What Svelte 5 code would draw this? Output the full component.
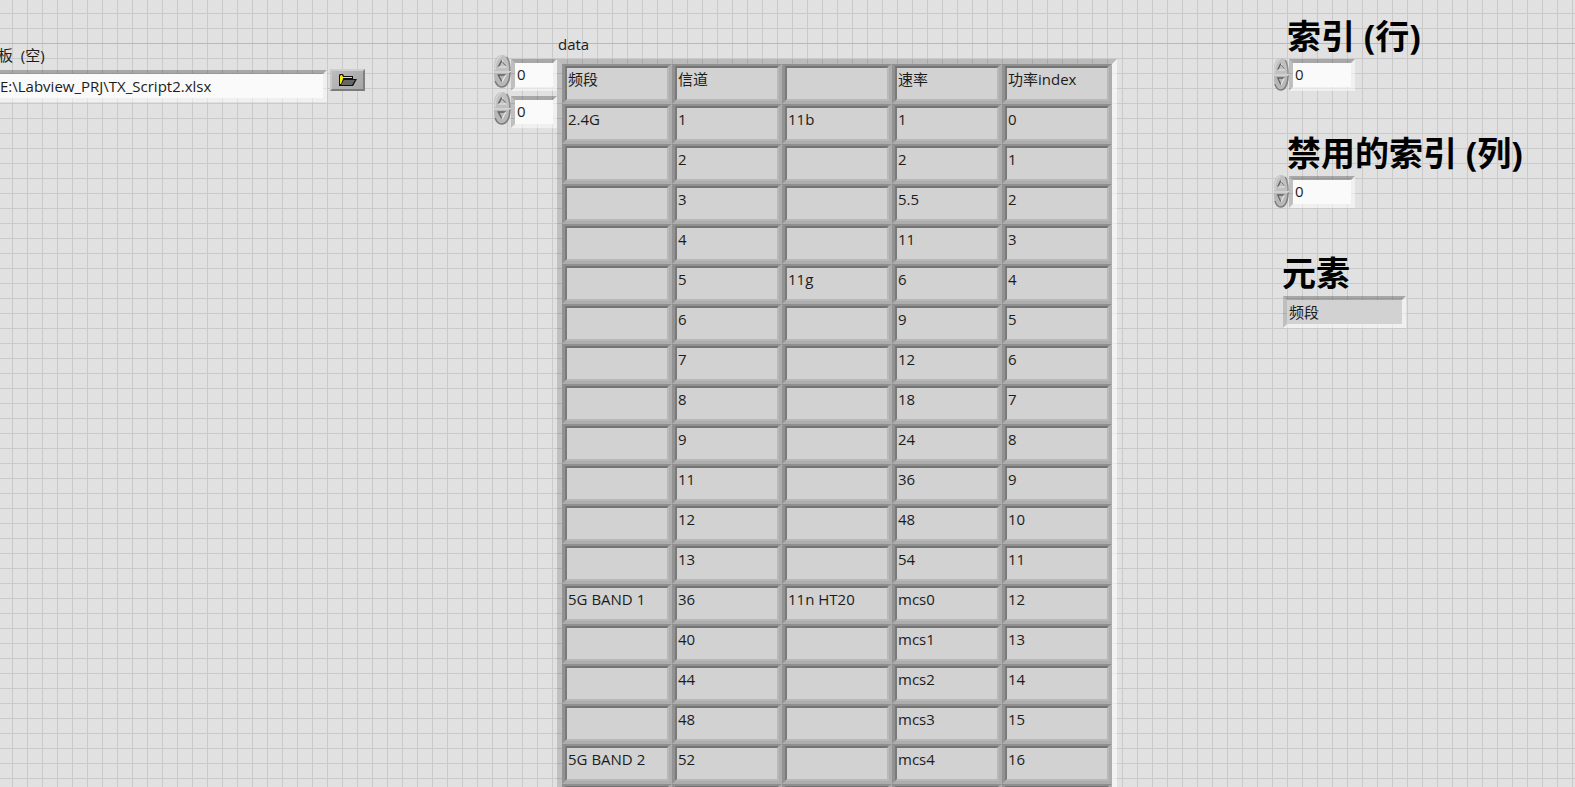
<script lang="ts">
	let path: string = $state('E:\\Labview_PRJ\\TX_Script2.xlsx');
	let dataRow: number = $state(0);
	let dataCol: number = $state(0);
	let row: number = $state(0);
	let col: number = $state(0);

	const data: string[][] = [
		['频段', '信道', '', '速率', '功率index'],
		['2.4G', '1', '11b', '1', '0'],
		['', '2', '', '2', '1'],
		['', '3', '', '5.5', '2'],
		['', '4', '', '11', '3'],
		['', '5', '11g', '6', '4'],
		['', '6', '', '9', '5'],
		['', '7', '', '12', '6'],
		['', '8', '', '18', '7'],
		['', '9', '', '24', '8'],
		['', '11', '', '36', '9'],
		['', '12', '', '48', '10'],
		['', '13', '', '54', '11'],
		['5G BAND 1', '36', '11n HT20', 'mcs0', '12'],
		['', '40', '', 'mcs1', '13'],
		['', '44', '', 'mcs2', '14'],
		['', '48', '', 'mcs3', '15'],
		['5G BAND 2', '52', '', 'mcs4', '16'],
		['', '', '', '', '']
	];

	let element: string = $derived(data[row]?.[col] ?? '');

	const down = (n: number) => Math.max(0, n - 1);
</script>

{#snippet spinner(inc: () => void, dec: () => void)}
	<span class="spinner">
		<button type="button" aria-label="Increment" onclick={inc}>
			<svg viewBox="0 0 17 17" preserveAspectRatio="none">
				<path d="M1 17V12C1 5 4 1 8.500 1S16 5 16 12V17Z" fill="#c0c0c0" />
				<path d="M13 3C15 6 16 9 16 17" fill="none" stroke="#8a8a8a" stroke-width="1.500" />
				<path d="M2 16C2 8 4 3 8 2" fill="none" stroke="#d4d4d4" stroke-width="1.500" />
				<path d="M5 13L8.500 6" stroke="#606060" stroke-width="1.500" />
				<path d="M8.500 6L12 13H5" fill="none" stroke="#e6e6e6" stroke-width="1" />
				<path d="M9 8L12 12" stroke="#707070" stroke-width="1" />
			</svg>
		</button>
		<button type="button" aria-label="Decrement" onclick={dec}>
			<svg viewBox="0 0 17 17" preserveAspectRatio="none">
				<path d="M1 0V5C1 12 4 16 8.500 16S16 12 16 5V0Z" fill="#b8b8b8" />
				<path d="M16 1C16 10 13 16 8 16C5 16 3 13 2 10" fill="none" stroke="#7c7c7c" stroke-width="1.500" />
				<path d="M1 1H16" stroke="#dadada" stroke-width="1.500" />
				<path d="M12 4H5L8.500 11" fill="none" stroke="#606060" stroke-width="1.300" />
				<path d="M12 4L8.500 11" stroke="#e6e6e6" stroke-width="1.200" />
			</svg>
		</button>
	</span>
{/snippet}

<main>
	<section class="file">
		<label for="path">板  (空)</label>
		<div class="file-row">
			<input id="path" class="sunken" type="text" bind:value={path} />
			<button class="browse" type="button" aria-label="Browse">
				<svg width="20" height="14" viewBox="0 0 20 14">
					<path d="M1 13V2L2 1H5L6 3H15V6H19L15 13Z" fill="#111" />
					<path d="M2 11V3L3 2H4L5 4H14V5H5V6L3 11Z" fill="#f4ee00" />
					<path d="M6 7H17L14 12H3Z" fill="#666" />
				</svg>
			</button>
		</div>
	</section>

	<section class="array">
		<div class="indices">
			<div class="control">
				{@render spinner(() => dataRow++, () => (dataRow = down(dataRow)))}
				<input class="sunken" type="text" aria-label="data row" bind:value={dataRow} />
			</div>
			<div class="control">
				{@render spinner(() => dataCol++, () => (dataCol = down(dataCol)))}
				<input class="sunken" type="text" aria-label="data column" bind:value={dataCol} />
			</div>
		</div>
		<div class="table">
			<h2 id="data-label">data</h2>
			<div class="frame">
				<table aria-labelledby="data-label">
					<tbody>
						{#each data as cells}
							<tr>
								{#each cells as cell}
									<td><div>{cell}</div></td>
								{/each}
							</tr>
						{/each}
					</tbody>
				</table>
			</div>
		</div>
	</section>

	<section class="lookup">
		<div class="field">
			<label for="row">索引 (行)</label>
			<div class="control">
				{@render spinner(() => row++, () => (row = down(row)))}
				<input id="row" class="sunken" type="text" bind:value={row} />
			</div>
		</div>
		<div class="field">
			<label for="col">禁用的索引 (列)</label>
			<div class="control">
				{@render spinner(() => col++, () => (col = down(col)))}
				<input id="col" class="sunken" type="text" bind:value={col} />
			</div>
		</div>
		<div class="field result">
			<label for="element">元素</label>
			<input id="element" class="sunken" type="text" readonly value={element} />
		</div>
	</section>
</main>

<style>
	:global(body) {
		background: #e1e1e1;
	}

	main {
		display: grid;
		grid-template-columns: 493fr auto 458fr;
		height: 100vh;
		overflow: hidden;
		font: 15px/20px 'Open Sans', 'Noto Sans CJK SC', sans-serif;
		color: #1c1c1c;
		background:
			linear-gradient(#b9b9b9, #b9b9b9) 0 43px / 100% 1px no-repeat,
			linear-gradient(#cacaca 1px, transparent 1px) 0 13px / 15px 15px,
			linear-gradient(90deg, #cacaca 1px, transparent 1px) 12px 0 / 15px 15px,
			#e1e1e1;
	}

	input,
	button {
		box-sizing: border-box;
		margin: 0;
		font: inherit;
		color: inherit;
	}

	button {
		padding: 0;
		border: 0;
		background: none;
		cursor: pointer;
	}

	svg {
		display: block;
	}

	.sunken {
		height: 32px;
		padding: 0 2px 2px;
		border: 4px solid;
		border-color: rgba(0, 0, 0, 0.25) rgba(255, 255, 255, 0.5) rgba(255, 255, 255, 0.5) rgba(0, 0, 0, 0.15);
		border-radius: 0;
		background: #fafafa;
		background-clip: padding-box;
		outline: none;
	}

	/* file path */
	.file {
		padding-top: 45px;
	}

	.file label {
		display: block;
		margin-left: -2px;
		white-space: pre;
	}

	.file-row {
		display: flex;
		align-items: flex-start;
		gap: 3px;
		padding: 4px 128px 0 0;
	}

	.file-row .sunken {
		flex: 1;
		min-width: 0;
		margin-top: 1px;
		padding: 0;
		border-left: 0;
	}

	.browse {
		display: grid;
		place-items: center;
		width: 35px;
		height: 22px;
		border: 2px solid;
		border-color: #cecece #808080 #7b7b7b #c8c8c8;
		background: linear-gradient(135deg, #bcbcbc, #a6a6a6);
	}

	/* numeric controls */
	.control {
		display: flex;
		align-items: flex-start;
	}

	.spinner {
		display: flex;
		flex-direction: column;
		width: 16px;
		height: 34px;
	}

	.spinner button {
		flex: 1;
		min-height: 0;
	}

	.spinner svg {
		width: 100%;
		height: 100%;
	}

	/* data array */
	.array {
		display: flex;
	}

	.indices {
		display: flex;
		flex-direction: column;
		width: 64px;
		padding-top: 54px;
	}

	.indices .spinner {
		width: 18px;
	}

	.indices .sunken {
		flex: 1;
		min-width: 0;
		margin-top: 5px;
	}

	.table h2 {
		margin: 0;
		padding: 34px 0 5px 1px;
		font-size: 15px;
		font-weight: 400;
		line-height: 20px;
	}

	.frame {
		border: 5px solid;
		border-color: rgba(0, 0, 0, 0.17) rgba(255, 255, 255, 0.6) transparent rgba(0, 0, 0, 0.14);
	}

	table {
		border-spacing: 0;
		border-collapse: separate;
	}

	td {
		box-sizing: border-box;
		width: 110px;
		height: 40px;
		padding: 0;
		border: solid;
		border-width: 2px 3px 3px 3px;
		border-color: #8f8f8f #adadad #adadad #929292;
	}

	td div {
		box-sizing: border-box;
		height: 35px;
		padding: 0 1px;
		border: 2px solid;
		border-color: #747474 #b8b8b8 #b8b8b8 #7a7a7a;
		background: #d2d2d2;
		line-height: 22px;
		white-space: nowrap;
	}

	/* element lookup */
	.lookup {
		display: flex;
		flex-direction: column;
		gap: 42px;
		padding: 16px 0 0 156px;
	}

	.field label {
		display: block;
		height: 41px;
		padding-left: 14px;
		font-size: 34px;
		font-weight: 700;
		line-height: 40px;
		color: #000;
		white-space: nowrap;
	}

	.lookup .sunken {
		width: 66px;
		margin-top: 2px;
	}

	.lookup .result {
		padding-top: 3px;
	}

	.result label {
		padding-left: 9px;
	}

	.lookup .result .sunken {
		width: 123px;
		margin-left: 10px;
		background-color: #d2d2d2;
	}
</style>
